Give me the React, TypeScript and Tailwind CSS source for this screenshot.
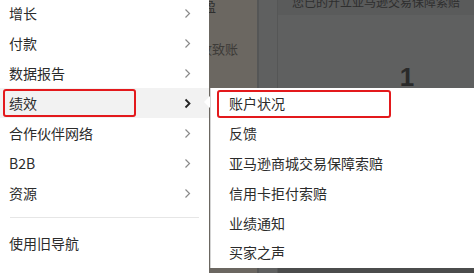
import React from "react";

const font = { fontFamily: '"Noto Sans CJK SC", "Noto Sans", sans-serif' };

function Chevron({ dark }: { dark?: boolean }) {
  return (
    <svg width="7" height="11" viewBox="0 0 7 11" className="shrink-0">
      <path
        d="M1.5 1.5 L5.5 5.5 L1.5 9.5"
        fill="none"
        stroke={dark ? "#222" : "#8a8a8a"}
        strokeWidth={dark ? 1.8 : 1.2}
      />
    </svg>
  );
}

const mainItems = ["增长", "付款", "数据报告", "绩效", "合作伙伴网络", "B2B", "资源"];
const subItems = ["账户状况", "反馈", "亚马逊商城交易保障索赔", "信用卡拒付索赔", "业绩通知", "买家之声"];

export default function App() {
  return (
    <div className="relative w-[474px] h-[273px] overflow-hidden bg-[#5f6060]" style={font}>
      {/* background page (dimmed) */}
      <div className="flex h-full">
        <div className="w-[257px] h-full bg-[#6b6761] relative">
          <div className="absolute left-[199px] top-[39px] text-[13px] text-[#3d3b38] whitespace-nowrap">收致账</div>
          <div className="absolute left-[203px] top-[-4px] text-[13px] text-[#2e2e2e] whitespace-nowrap">盈</div>
        </div>
        <div className="w-[2px] h-full bg-[#555656]" />
        <div className="w-[18px] h-full bg-[#5f6060]" />
        <div className="w-[1px] h-full bg-[#555656]" />
        <div className="flex-1 flex flex-col">
          <div className="h-[15px] bg-[#5a5b5b] relative overflow-hidden">
            <div className="absolute left-[14px] top-[-6px] text-[12px] leading-[16px] text-[#2e2e2e] whitespace-nowrap">
              您已的开立亚马逊交易保障索赔
            </div>
          </div>
          <div className="flex-1 flex justify-center">
            <div className="mt-[49px] ml-[62px] text-[26px] font-bold leading-[26px] text-[#2a2a2a]" style={{ fontFamily: '"Liberation Sans", sans-serif' }}>
              1
            </div>
          </div>
          <div className="h-[5px] bg-[#4b4c4c]" />
        </div>
      </div>

      {/* left menu */}
      <div className="absolute left-0 top-0 w-[209px] h-[273px] bg-white">
        <div className="flex flex-col mt-[-2px]">
          {mainItems.map((t) => {
            const active = t === "绩效";
            return (
              <div
                key={t}
                className={`relative h-[30px] flex items-center justify-between pl-[9px] pr-[18px] text-[14px] text-[#2b2b2b] ${active ? "bg-[#f2f2f2]" : ""}`}
              >
                <span>{t}</span>
                <Chevron dark={active} />
                {active && (
                  <div className="absolute left-[3px] top-[1px] w-[133px] h-[28px] border-2 border-[#e3191c] rounded-[3px]" />
                )}
              </div>
            );
          })}
        </div>
        <div className="mx-[10px] mt-[9px] h-[1px] bg-[#e6e6e6]" />
        <div className="h-[30px] mt-[10px] flex items-center pl-[9px] text-[14px] text-[#2b2b2b]">使用旧导航</div>
      </div>

      {/* submenu */}
      <div className="absolute left-[210px] top-[88px] right-0 h-[180px] bg-white border-l border-[#d4d4d4]">
        <div className="absolute left-[-7px] top-[8px] w-0 h-0 border-y-[6px] border-y-transparent border-r-[6px] border-r-white" />
        <div className="flex flex-col pt-[1px]">
          {subItems.map((t, i) => (
            <div key={t} className="relative h-[29.8px] flex items-center pl-[18px] text-[14px] text-[#2b2b2b]">
              <span>{t}</span>
              {i === 0 && (
                <div className="absolute left-[6px] top-[1px] w-[174px] h-[28px] border-2 border-[#e3191c] rounded-[3px]" />
              )}
            </div>
          ))}
        </div>
      </div>
    </div>
  );
}
